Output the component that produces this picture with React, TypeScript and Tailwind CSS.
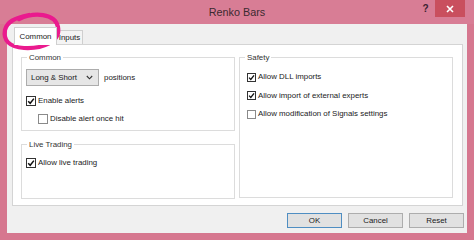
import React from "react";

function Check({ checked, size = 10 }: { checked?: boolean; size?: number }) {
  return (
    <div
      className={`shrink-0 bg-white border ${checked ? "border-[#333333]" : "border-[#8a8a8a]"} flex items-center justify-center`}
      style={{ width: size, height: size }}
    >
      {checked && (
        <svg width={size - 2} height={size - 2} viewBox="0 0 10 10">
          <path d="M1.5 5.2 L4 7.8 L8.6 2" fill="none" stroke="#111" strokeWidth="1.9" />
        </svg>
      )}
    </div>
  );
}

function Group({ label, className, children }: { label: string; className: string; children?: React.ReactNode }) {
  return (
    <div className={`border border-[#dcdcdc] flex flex-col ${className}`}>
      <div className="-mt-[6px] ml-[5px] px-[2px] w-fit bg-white h-[11px] leading-[11px] text-[#333]">{label}</div>
      {children}
    </div>
  );
}

function Row({ checked, text, size, className }: { checked?: boolean; text: string; size?: number; className: string }) {
  return (
    <div className={`flex items-center h-[12px] gap-[2px] ${className}`}>
      <Check checked={checked} size={size} />
      <span className="text-[#1a1a1a] leading-[12px] whitespace-nowrap">{text}</span>
    </div>
  );
}

function Btn({ label, def }: { label: string; def?: boolean }) {
  return (
    <div
      className={`w-[55px] h-[15px] flex items-center justify-center bg-[#e1e1e1] border ${def ? "border-[#4f8ec2]" : "border-[#adadad]"} text-[#1a1a1a]`}
    >
      {label}
    </div>
  );
}

export default function App() {
  return (
    <div className="w-[474px] h-[240px] bg-[#d6778f] flex flex-col relative overflow-hidden font-['Liberation_Sans',Arial,sans-serif] text-[7.9px]">
      {/* title bar */}
      <div className="h-[24px] flex shrink-0 bg-[#d87d95]">
        <div className="w-[64px]" />
        <div className="flex-1 flex items-center justify-center text-[10.8px] text-[#3a2a30] pt-[1px]">Renko Bars</div>
        <div className="w-[64px] flex items-start">
          <div className="w-[25px] h-[17px] flex items-center justify-center text-[10px] font-bold text-[#3b2231] pl-[6px]">?</div>
          <div className="w-[30px] h-[17px] bg-[#c94f5e] flex items-center justify-center">
            <svg width="8" height="8" viewBox="0 0 8 8">
              <path d="M1 1 L7 7 M7 1 L1 7" stroke="#fff" strokeWidth="1.6" />
            </svg>
          </div>
        </div>
      </div>

      {/* client area */}
      <div className="mx-[7px] h-[209px] bg-[#f0f0f0] flex flex-col shrink-0">
        {/* tabs */}
        <div className="h-[20px] pl-[7px] flex items-end">
          <div className="w-[43px] h-[18px] bg-white border border-[#cfcfcf] border-b-0 -mb-px relative z-10 flex items-center justify-center text-[#1a1a1a]">
            Common
          </div>
          <div className="w-[26px] h-[14px] bg-[#f4f4f4] border border-[#cfcfcf] border-l-0 border-b-0 flex items-center justify-center text-[#1a1a1a]">
            Inputs
          </div>
        </div>
        {/* tab page */}
        <div className="ml-[5px] mr-[4px] h-[162px] bg-white border border-[#d4d4d4] pt-[12px] px-[8px] flex gap-[4px]">
          <div className="w-[214px] flex flex-col gap-[13px]">
            <Group label="Common" className="h-[74px]">
              <div className="flex items-center mt-[6px] ml-[4px]">
                <div className="w-[73px] h-[17px] bg-[#e6e6e6] border border-[#acacac] flex items-center justify-between pl-[4px] pr-[5px] text-[#1a1a1a]">
                  <span>Long &amp; Short</span>
                  <svg width="7" height="5" viewBox="0 0 7 5">
                    <path d="M0.8 1 L3.5 3.8 L6.2 1" fill="none" stroke="#333" strokeWidth="1.1" />
                  </svg>
                </div>
                <span className="ml-[5px] text-[#1a1a1a]">positions</span>
              </div>
              <Row checked text="Enable alerts" size={10} className="mt-[9px] ml-[4px]" />
              <Row text="Disable alert once hit" size={10} className="mt-[6px] ml-[16px]" />
            </Group>
            <Group label="Live Trading" className="h-[55px]">
              <Row checked text="Allow live trading" size={10} className="mt-[7px] ml-[4px]" />
            </Group>
          </div>
          <Group label="Safety" className="w-[214px] h-[141px]">
            <Row checked text="Allow DLL imports" size={9} className="mt-[8px] ml-[7px]" />
            <Row checked text="Allow import of external experts" size={9} className="mt-[6.5px] ml-[7px]" />
            <Row text="Allow modification of Signals settings" size={9} className="mt-[6.5px] ml-[7px]" />
          </Group>
        </div>
        {/* buttons */}
        <div className="mt-[7px] flex justify-end gap-[6px] pr-[3px]">
          <Btn label="OK" def />
          <Btn label="Cancel" />
          <Btn label="Reset" />
        </div>
      </div>

      {/* annotation ring */}
      <svg className="absolute left-0 top-0 pointer-events-none" width="70" height="60" viewBox="0 0 70 60">
        <path
          d="M19 19 C34 12 55 13 58 27 C61 42 42 49 24 48 C9 47 3 40 5 30 C7 22 14 18 29 15"
          fill="none"
          stroke="#ea1a8e"
          strokeWidth="4.2"
          strokeLinecap="round"
        />
      </svg>
    </div>
  );
}
